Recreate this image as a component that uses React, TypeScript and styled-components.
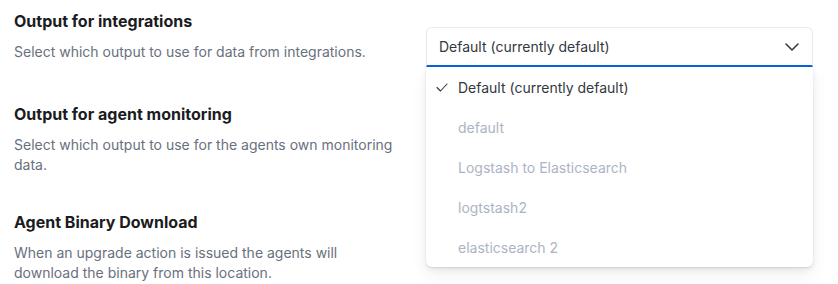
import React from "react";
import styled, { createGlobalStyle } from "styled-components";

const GlobalStyle = createGlobalStyle`
  html, body {
    margin: 0;
    padding: 0;
    background: #ffffff;
  }
  body {
    font-family: "Inter", "Liberation Sans", sans-serif;
    -webkit-font-smoothing: antialiased;
  }
`;

const sections = [
  {
    title: "Output for integrations",
    description: "Select which output to use for data from integrations.",
    withSelect: true,
  },
  {
    title: "Output for agent monitoring",
    description: "Select which output to use for the agents own monitoring data.",
  },
  {
    title: "Agent Binary Download",
    description:
      "When an upgrade action is issued the agents will download the binary from this location.",
  },
];

const options = [
  { label: "Default (currently default)", selected: true },
  { label: "default", disabled: true },
  { label: "Logstash to Elasticsearch", disabled: true },
  { label: "logtstash2", disabled: true },
  { label: "elasticsearch 2", disabled: true },
];

const ChevronDown = () => (
  <svg width="14" height="8" viewBox="0 0 14 8" fill="none">
    <path d="M1 1l6 6 6-6" stroke="#343741" strokeWidth="1.5" strokeLinecap="round" strokeLinejoin="round" />
  </svg>
);

const Check = () => (
  <svg width="12" height="9" viewBox="0 0 12 9" fill="none">
    <path d="M1 4.5l3.5 3.5L11 1" stroke="#343741" strokeWidth="1.1" strokeLinecap="round" strokeLinejoin="round" />
  </svg>
);

export default function App() {
  return (
    <>
      <GlobalStyle />
      <Page>
        {sections.map((s) => (
          <Row key={s.title}>
            <Describe>
              <Title>{s.title}</Title>
              <Description>{s.description}</Description>
            </Describe>
            <Field>
              {s.withSelect && (
                <SelectWrap>
                  <SelectBox>
                    <span>Default (currently default)</span>
                    <ChevronDown />
                  </SelectBox>
                  <Dropdown>
                    {options.map((o) => (
                      <Option key={o.label} $disabled={o.disabled}>
                        <CheckSlot>{o.selected && <Check />}</CheckSlot>
                        {o.label}
                      </Option>
                    ))}
                  </Dropdown>
                </SelectWrap>
              )}
            </Field>
          </Row>
        ))}
      </Page>
    </>
  );
}

const Page = styled.div`
  width: 838px;
  height: 284px;
  overflow: hidden;
  padding: 9px 0 0 14px;
  box-sizing: border-box;
  display: flex;
  flex-direction: column;
  gap: 35px;
`;

const Row = styled.div`
  display: grid;
  grid-template-columns: 386px 387px;
  column-gap: 26px;
`;

const Describe = styled.div`
  display: flex;
  flex-direction: column;
  gap: 9px;
`;

const Title = styled.h3`
  margin: 0;
  font-size: 16px;
  line-height: 24px;
  font-weight: 700;
  color: #1a1c21;
`;

const Description = styled.p`
  margin: 0;
  font-size: 14px;
  line-height: 20px;
  color: #69707d;
`;

const Field = styled.div`
  padding-top: 18px;
`;

const SelectWrap = styled.div`
  position: relative;
`;

const SelectBox = styled.div`
  height: 40px;
  box-sizing: border-box;
  display: flex;
  align-items: center;
  justify-content: space-between;
  padding: 0 13px 0 12px;
  background: #ffffff;
  border: 1px solid #e6e9ef;
  border-bottom: 2px solid #0b64dd;
  border-radius: 6px 6px 0 0;
  font-size: 14px;
  color: #343741;
`;

const Dropdown = styled.div`
  position: absolute;
  top: 40px;
  left: 0;
  right: 0;
  background: #ffffff;
  border-radius: 0 0 6px 6px;
  box-shadow: 0 1px 2px rgba(0, 0, 0, 0.1), 0 3px 6px rgba(0, 0, 0, 0.06),
    0 8px 18px rgba(0, 0, 0, 0.06);
  z-index: 2;
`;

const Option = styled.div<{ $disabled?: boolean }>`
  height: 40px;
  display: flex;
  align-items: center;
  padding-left: 10px;
  font-size: 14px;
  color: ${({ $disabled }) => ($disabled ? "#abb4c4" : "#343741")};
`;

const CheckSlot = styled.span`
  width: 22px;
  display: inline-flex;
  align-items: center;
`;
